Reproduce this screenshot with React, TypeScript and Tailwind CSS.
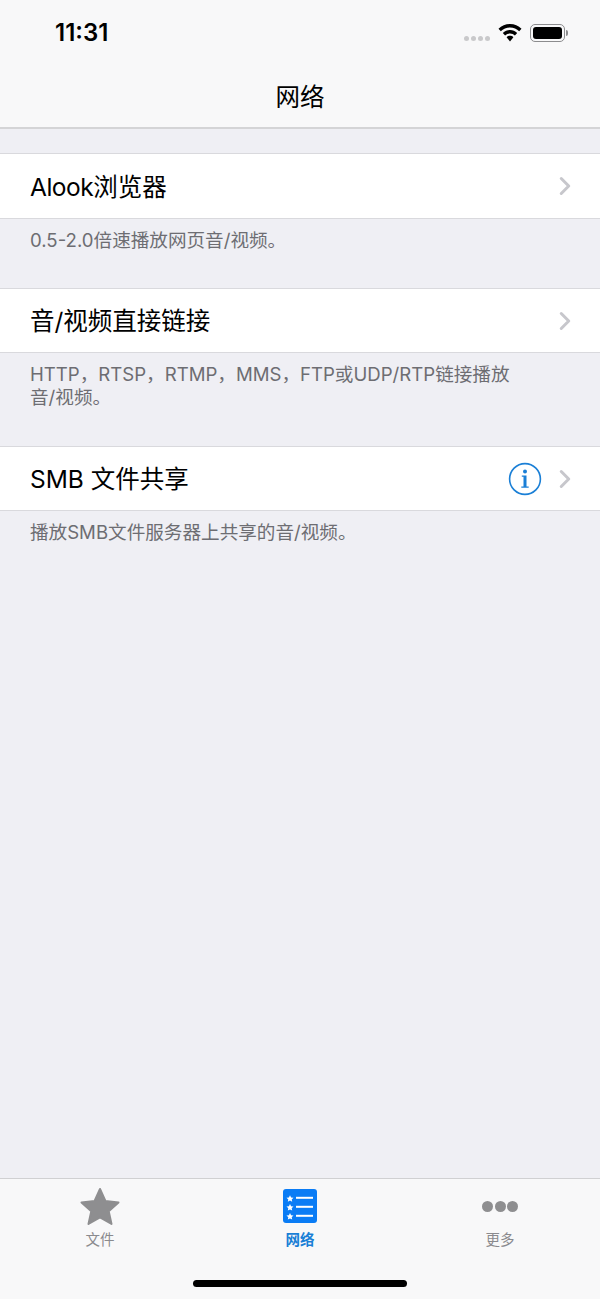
import React from "react";
import { ChevronRight } from "lucide-react";

const FONT = "font-['Inter','Noto_Sans_CJK_SC',sans-serif]";

const Row = ({ title, info, tall }: { title: React.ReactNode; info?: boolean; tall?: boolean }) => (
  <div className={`flex ${tall ? "h-[66px]" : "h-[65px]"} items-center border-y border-[#d9d9dd] bg-white pl-[30px] pr-[26px]`}>
    <span className="flex-1 pt-[1px] text-[24.5px] leading-[30px] text-black">{title}</span>
    {info && (
      <svg width="34" height="34" viewBox="0 0 34 34" className="mr-[8px]">
        <circle cx="17" cy="17" r="15.4" fill="none" stroke="#1a7fd6" strokeWidth="1.6" />
        <circle cx="17" cy="9.500" r="2" fill="#1a7fd6" />
        <path d="M13.800 13.500h4.700v11h2.200v1.300h-7.400v-1.300h2.200v-9.700h-1.700z" fill="#1a7fd6" />
      </svg>
    )}
    <ChevronRight size={30} strokeWidth={2.4} className="mr-[-6px] text-[#c7c7cc]" />
  </div>
);

const TabItem = ({
  label,
  active,
  children,
}: {
  label: string;
  active?: boolean;
  children: React.ReactNode;
}) => (
  <div className="flex w-[200px] flex-col items-center">
    <div className="flex h-[40px] items-center justify-center">{children}</div>
    <span
      className={`mt-[4px] text-[14.5px] leading-[20px] ${active ? "font-semibold text-[#1a7fd6]" : "text-[#8a8a8e]"}`}
    >
      {label}
    </span>
  </div>
);

export default function App() {
  return (
    <div className={`${FONT} flex h-[1299px] w-[600px] flex-col bg-[#efeff4]`}>
      <header className="h-[129px] border-b-2 border-[#d4d4d6] bg-[#f8f8f9]">
        <div className="flex h-[66px] items-center justify-between pl-[55px] pr-[32px]">
          <span className="text-[24px] font-semibold leading-[30px] text-black">11:31</span>
          <div className="flex items-center">
            <div className="mr-[8px] mt-[10px] flex gap-[2px]">
              <span className="h-[5px] w-[5px] rounded-full bg-[#c9c9cb]" />
              <span className="h-[5px] w-[5px] rounded-full bg-[#c9c9cb]" />
              <span className="h-[5px] w-[5px] rounded-full bg-[#c9c9cb]" />
              <span className="h-[5px] w-[5px] rounded-full bg-[#c9c9cb]" />
            </div>
            <svg width="24" height="18" viewBox="0 0 24 18" className="mr-[8px]">
              <path d="M12 0C7.500 0 3.500 1.800 .5 4.700l2.300 2.500C5.200 4.900 8.400 3.500 12 3.500s6.800 1.400 9.200 3.700l2.300-2.500C20.500 1.800 16.500 0 12 0z" fill="#000" />
              <path d="M12 6c-2.800 0-5.300 1.100-7.200 2.900l2.300 2.500c1.300-1.200 3-2 4.900-2s3.600.8 4.900 2l2.300-2.500C17.300 7.100 14.800 6 12 6z" fill="#000" />
              <path d="M12 11.800c-1.300 0-2.500.5-3.400 1.400L12 17.500l3.400-4.300c-.9-.9-2.100-1.400-3.400-1.400z" fill="#000" />
            </svg>
            <div className="h-[18px] w-[35px] rounded-[5px] border border-[#8c8c8e] p-[2px]">
              <div className="h-full w-full rounded-[3px] bg-black" />
            </div>
            <div className="ml-[1px] h-[6px] w-[2px] rounded-r-full bg-[#8c8c8e]" />
          </div>
        </div>
        <div className="flex h-[60px] items-center justify-center pt-[2px] text-[24.5px] font-normal leading-[30px] text-black">
          网络
        </div>
      </header>

      <main className="flex-1 pt-[24px]">
        <Row tall title={<><span className="tracking-[-0.5px]">Alook</span>浏览器</>} />
        <p className="px-[30px] pb-[36px] pt-[10px] text-[18.6px] leading-[23px] text-[#6d6d72]">
          0.5-2.0倍速播放网页音/视频。
        </p>
        <Row title="音/视频直接链接" />
        <p className="px-[30px] pb-[37px] pt-[10px] text-[18.6px] leading-[23px] text-[#6d6d72]">
          HTTP，RTSP，RTMP，MMS，FTP或UDP/RTP链接播放
          <br />
          音/视频。
        </p>
        <Row title="SMB 文件共享" info />
        <p className="px-[30px] pt-[10px] text-[18.6px] leading-[23px] text-[#6d6d72]">
          播放SMB文件服务器上共享的音/视频。
        </p>
      </main>

      <footer className="relative h-[121px] border-t border-[#d0d0d2] bg-[#f8f8f9] pt-[7px]">
        <div className="flex">
          <TabItem label="文件">
            <svg width="42" height="40" viewBox="0 0 42 40">
              <path
                d="M21 3l5.400 12 13.100 1.400-9.800 8.800 2.800 12.800L21 31.400 9.500 38l2.800-12.800-9.800-8.800 13.100-1.400z"
                fill="#8e8e90"
                stroke="#8e8e90"
                strokeWidth="2"
                strokeLinejoin="round"
              />
            </svg>
          </TabItem>
          <TabItem label="网络" active>
            <svg width="34" height="34" viewBox="0 0 34 34">
              <rect width="34" height="34" rx="3" fill="#0a7cf5" />
              <path d="M7 6.200l1.100 2.300 2.400.3-1.800 1.600.5 2.400L7 11.600l-2.200 1.200.5-2.400-1.800-1.600 2.400-.3z" fill="#fff" />
              <path d="M7 15l1.100 2.300 2.400.3-1.800 1.600.5 2.400L7 20.400l-2.200 1.200.5-2.400-1.800-1.600 2.400-.3z" fill="#fff" />
              <path d="M7 24l1.100 2.300 2.400.3-1.800 1.600.5 2.400L7 29.400l-2.200 1.200.5-2.400-1.800-1.600 2.400-.3z" fill="#fff" />
              <rect x="13" y="7.800" width="17" height="2" fill="#fff" />
              <rect x="13" y="16.800" width="17" height="2" fill="#fff" />
              <rect x="13" y="25.800" width="17" height="2" fill="#fff" />
            </svg>
          </TabItem>
          <TabItem label="更多">
            <div className="flex gap-[1.500px]">
              <span className="h-[11px] w-[11px] rounded-full bg-[#8e8e90]" />
              <span className="h-[11px] w-[11px] rounded-full bg-[#8e8e90]" />
              <span className="h-[11px] w-[11px] rounded-full bg-[#8e8e90]" />
            </div>
          </TabItem>
        </div>
        <div className="absolute bottom-[12px] left-[193px] h-[7px] w-[214px] rounded-full bg-black" />
      </footer>
    </div>
  );
}
